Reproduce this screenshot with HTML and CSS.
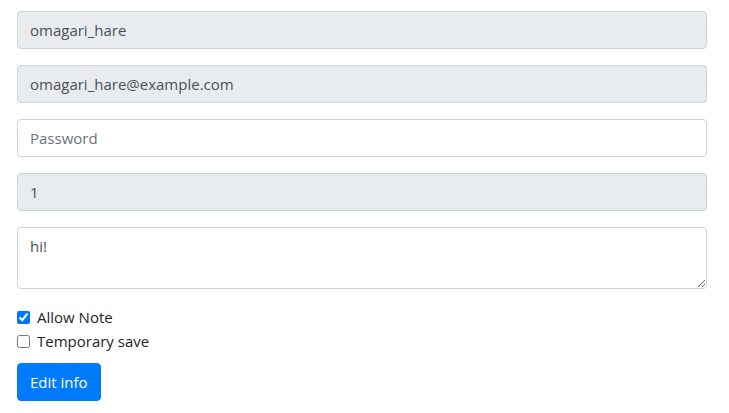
FILE: index.html
```html
<!DOCTYPE html>
<html>
<head>
<meta charset="utf-8">
<link rel="stylesheet" href="styles.css">
</head>
<body>
<form class="form">
  <div class="group"><input class="control readonly" type="text" value="omagari_hare" readonly></div>
  <div class="group"><input class="control readonly" type="text" value="omagari_hare@example.com" readonly></div>
  <div class="group"><input class="control" type="password" placeholder="Password"></div>
  <div class="group"><input class="control readonly" type="text" value="1" readonly></div>
  <div class="group"><textarea class="control area">hi!</textarea></div>
  <div class="check"><input type="checkbox" id="c1" checked><label for="c1">Allow Note</label></div>
  <div class="check"><input type="checkbox" id="c2"><label for="c2">Temporary save</label></div>
  <button type="button" class="btn">Edit info</button>
</form>
</body>
</html>
```

FILE: styles.css
```css
html, body {
  margin: 0;
  padding: 0;
  background: #fff;
}
body {
  font-family: "Open Sans", "Noto Sans", sans-serif;
  font-size: 15px;
  color: #212529;
}
.form {
  display: flex;
  flex-direction: column;
  padding: 11px 22px 0 17px;
}
.group {
  margin-bottom: 16px;
}
.control {
  display: block;
  box-sizing: border-box;
  width: 100%;
  height: 38px;
  padding: 6px 12px;
  font-family: inherit;
  font-size: 15px;
  color: #495057;
  background: #fff;
  border: 1px solid #ced4da;
  border-radius: 4px;
  outline: none;
  margin: 0;
}
.control::placeholder {
  color: #6c757d;
}
.readonly {
  background: #e9ecef;
}
.area {
  height: 62px;
  resize: vertical;
  line-height: 24px;
  padding-top: 6px;
}
.check {
  display: flex;
  align-items: center;
  height: 24px;
}
.check input {
  margin: 0 7px 0 0;
  width: 13px;
  height: 13px;
}
.check label {
  font-size: 15px;
  color: #212529;
}
.btn {
  align-self: flex-start;
  margin-top: 10px;
  height: 38px;
  padding: 0 12px;
  font-family: inherit;
  font-size: 15px;
  color: #fff;
  background: #007bff;
  border: 1px solid #007bff;
  border-radius: 4px;
}
```
